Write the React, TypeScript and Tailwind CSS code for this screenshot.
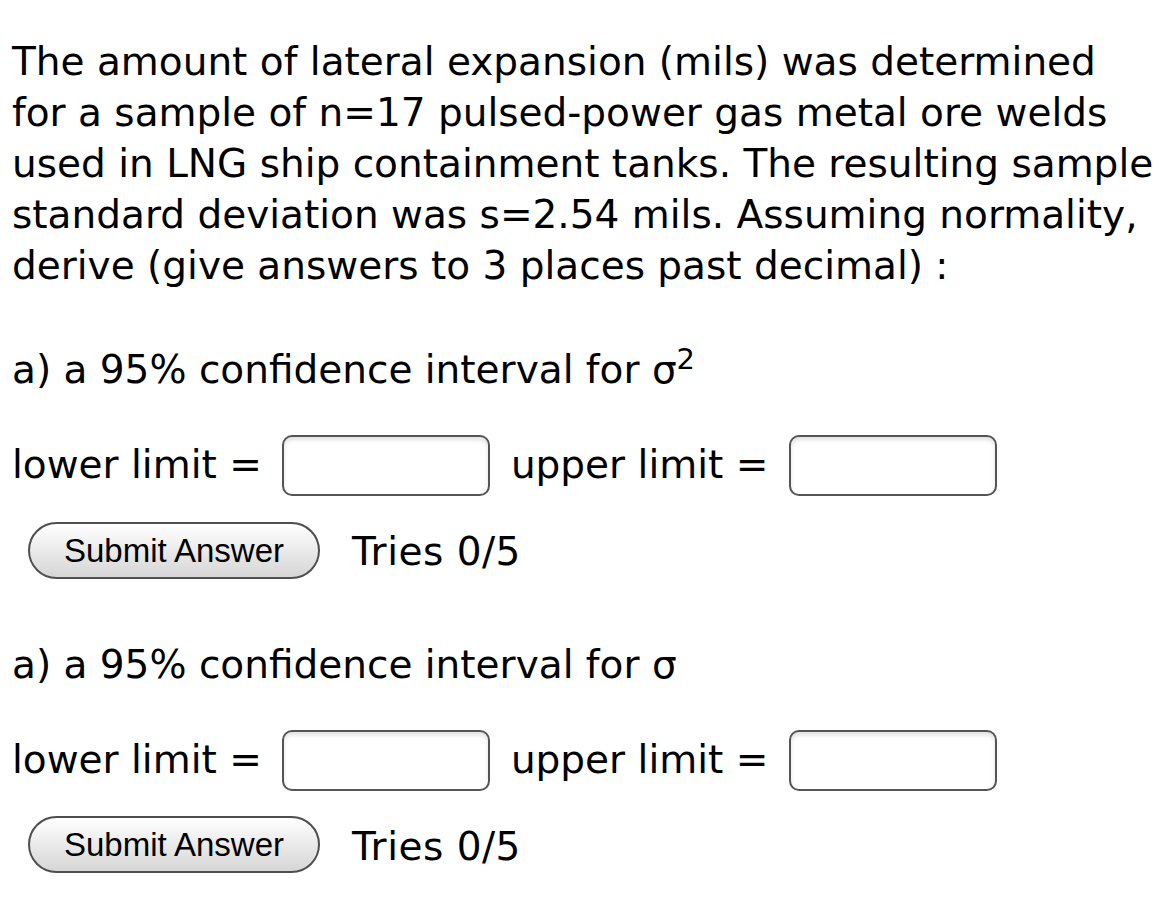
const FONT = "font-['DejaVu_Sans',Verdana,sans-serif]";

function AnswerInput() {
  return (
    <input
      type="text"
      className="h-[61px] w-[208px] rounded-[10px] border-2 border-[#555] bg-white shadow-[inset_0_3px_4px_rgba(0,0,0,0.12)] outline-none"
    />
  );
}

function SubmitRow() {
  return (
    <div className="mt-[23px] flex items-center">
      <button
        type="button"
        className="ml-[16px] h-[57px] w-[292px] rounded-full border-2 border-[#4f4f4f] bg-gradient-to-b from-white to-[#d6d6d6] font-['Liberation_Sans',Arial,sans-serif] text-[33px] text-black"
      >
        Submit Answer
      </button>
      <span className="ml-[32px] mt-[4px] text-[39px] tracking-[0.5px]">Tries 0/5</span>
    </div>
  );
}

function IntervalPart({ children }: { children: React.ReactNode }) {
  return (
    <section>
      <p className="leading-[51px]">{children}</p>
      <div className="mt-[40px] flex items-center">
        <span className="mr-[20px]">lower limit =</span>
        <AnswerInput />
        <span className="ml-[21px] mr-[21px]">upper limit =</span>
        <AnswerInput />
      </div>
      <SubmitRow />
    </section>
  );
}

export default function App() {
  return (
    <div className={`${FONT} min-h-screen bg-white pl-[12px] pt-[36px] text-[39px] text-black`}>
      <p className="leading-[51px]">
        The amount of lateral expansion (mils) was determined
        <br />
        for a sample of n=17 pulsed-power gas metal ore welds
        <br />
        used in LNG ship containment tanks. The resulting sample
        <br />
        standard deviation was s=2.54 mils. Assuming normality,
        <br />
        derive (give answers to 3 places past decimal) :
      </p>

      <div className="mt-[53px]">
        <IntervalPart>
          a) a 95% confidence interval for σ<sup className="text-[29px]">2</sup>
        </IntervalPart>
      </div>

      <div className="mt-[57px]">
        <IntervalPart>a) a 95% confidence interval for σ</IntervalPart>
      </div>
    </div>
  );
}
